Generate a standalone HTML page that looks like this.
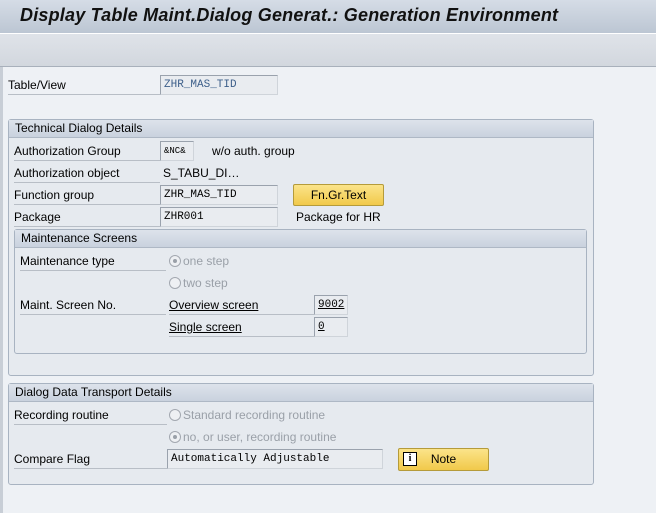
<!DOCTYPE html>
<html><head><style>
body{margin:0;width:656px;height:513px;overflow:hidden;background:#eef1f5;font-family:"Liberation Sans",sans-serif;font-size:12px;color:#000;position:relative}
.a{position:absolute;white-space:nowrap}
.title{left:0;top:0;width:656px;height:33px;background:linear-gradient(#d5dce6,#bcc6d3);border-bottom:1px solid #fff}
.title span{position:absolute;left:20px;top:5px;font-weight:bold;font-style:italic;font-size:18px;letter-spacing:0.2px;color:#111}
.tb{left:0;top:34px;width:656px;height:32px;background:linear-gradient(#dfe3e9,#d2d7de);border-bottom:1px solid #a8b0bb}
.lb{line-height:17px}
.ul{border-bottom:1px solid #b8bec6}
.in{background:#e9ecf0;border:1px solid #9aa2ad;border-right-color:#cfd4da;border-bottom-color:#cfd4da;font-family:"Liberation Mono",monospace;font-size:11px;line-height:19px;padding-left:3px;box-sizing:border-box;height:20px}
.grp{border:1px solid #a8b3c1;background:#e6eaef;border-radius:3px}
.gh{position:absolute;left:0;top:0;right:0;height:17px;background:linear-gradient(#dde3eb,#c9d2de);border-bottom:1px solid #aeb8c5;padding-left:6px;line-height:17px;font-size:12px}
.btn{background:linear-gradient(#fbe48a,#f1c94a);border:1px solid #b59b3a;border-radius:2px;text-align:center;line-height:20px;font-size:12px}
.dis{color:#9aa0a8}
.rad{display:inline-block;width:10px;height:10px;border:1px solid #a3a8b0;border-radius:50%;vertical-align:-2px;margin-right:2px;position:relative;background:#eef0f3}
.rad.on:after{content:"";position:absolute;left:3px;top:3px;width:4px;height:4px;border-radius:50%;background:#9aa0a8}
u{text-decoration:underline}
</style></head><body>
<div class="a" style="left:0;top:0;width:3px;height:513px;background:#c8ced6"></div>
<div class="a title"><span>Display Table Maint.Dialog Generat.: Generation Environment</span></div>
<div class="a tb"></div>

<div class="a lb ul" style="left:8px;top:77px;width:152px">Table/View</div>
<div class="a in" style="left:160px;top:75px;width:118px;color:#3d5f8a">ZHR_MAS_TID</div>

<div class="a grp" style="left:8px;top:119px;width:584px;height:255px"><div class="gh">Technical Dialog Details</div></div>
<div class="a lb ul" style="left:14px;top:143px;width:146px">Authorization Group</div>
<div class="a in" style="left:160px;top:141px;width:34px;font-size:9px">&amp;NC&amp;</div>
<div class="a lb" style="left:212px;top:143px">w/o auth. group</div>
<div class="a lb ul" style="left:14px;top:165px;width:146px">Authorization object</div>
<div class="a lb" style="left:163px;top:165px">S_TABU_DI…</div>
<div class="a lb ul" style="left:14px;top:187px;width:146px">Function group</div>
<div class="a in" style="left:160px;top:185px;width:118px">ZHR_MAS_TID</div>
<div class="a btn" style="left:293px;top:184px;width:89px;height:20px">Fn.Gr.Text</div>
<div class="a lb ul" style="left:14px;top:209px;width:146px">Package</div>
<div class="a in" style="left:160px;top:207px;width:118px">ZHR001</div>
<div class="a lb" style="left:296px;top:209px">Package for HR</div>

<div class="a grp" style="left:14px;top:229px;width:571px;height:123px"><div class="gh">Maintenance Screens</div></div>
<div class="a lb ul" style="left:20px;top:253px;width:146px">Maintenance type</div>
<div class="a lb dis" style="left:169px;top:253px"><span class="rad on"></span>one step</div>
<div class="a lb dis" style="left:169px;top:275px"><span class="rad"></span>two step</div>
<div class="a lb ul" style="left:20px;top:297px;width:146px">Maint. Screen No.</div>
<div class="a lb ul" style="left:169px;top:297px;width:145px"><u>Overview screen</u></div>
<div class="a in" style="left:314px;top:295px;width:34px"><u>9002</u></div>
<div class="a lb ul" style="left:169px;top:319px;width:145px"><u>Single screen</u></div>
<div class="a in" style="left:314px;top:317px;width:34px"><u>0</u></div>

<div class="a grp" style="left:8px;top:383px;width:584px;height:100px"><div class="gh">Dialog Data Transport Details</div></div>
<div class="a lb ul" style="left:14px;top:407px;width:153px">Recording routine</div>
<div class="a lb dis" style="left:169px;top:407px"><span class="rad"></span>Standard recording routine</div>
<div class="a lb dis" style="left:169px;top:429px"><span class="rad on"></span>no, or user, recording routine</div>
<div class="a lb ul" style="left:14px;top:451px;width:153px">Compare Flag</div>
<div class="a in" style="left:167px;top:449px;width:216px">Automatically Adjustable</div>
<div class="a btn" style="left:398px;top:448px;width:89px;height:21px"><span style="position:absolute;left:4px;top:3px;width:12px;height:12px;border:1px solid #000;background:#fff;font:bold 10px/12px 'Liberation Serif',serif;text-align:center">i</span>Note</div>
</body></html>
